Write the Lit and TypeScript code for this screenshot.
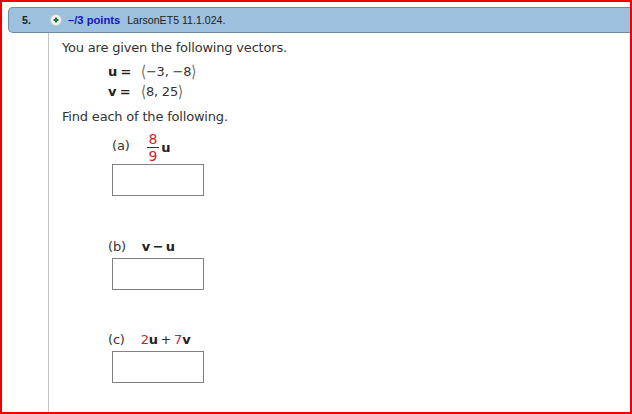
import { LitElement, html, css } from "lit";
import { customElement } from "lit/decorators.js";

@customElement("app-root")
export class AppRoot extends LitElement {
  static styles = css`
    :host {
      display: block; box-sizing: border-box; width: 632px; height: 414px;
      border: 2px solid #f00000; background: #fff; overflow: hidden;
      font-family: "DejaVu Sans", Verdana, sans-serif; font-size: 13px; color: #333;
      letter-spacing: -0.19px;
    }
    .page { display: flex; flex-direction: column; height: 100%; padding-top: 5px; box-sizing: border-box; }
    .head {
      display: flex; align-items: center; height: 26px; box-sizing: border-box; margin-left: 6px;
      background: #9dc0df; border: 1px solid #6f8ba0; border-right: none; border-radius: 5px 0 0 5px;
      font-family: "Liberation Sans", Arial, sans-serif; font-size: 10.6px; color: #222; letter-spacing: 0;
    }
    .num { width: 28px; padding-left: 13px; font-weight: bold; }
    .plus { display: block; margin-right: 5px; }
    .pts { color: #1414c8; font-weight: bold; font-size: 11.2px; margin-left: 1px; margin-right: 7px; }
    .body { flex: 1; margin-left: 46px; border-left: 1px solid #c4c4c4; padding: 7px 0 0 13px; line-height: 15px; }
    .vecs { margin: 9px 0 10px 46px; display: grid; grid-template-columns: 33px auto; justify-content: start; row-gap: 5px; }
    b { color: #222; letter-spacing: -0.6px; }
    .red { color: #d01c2c; }
    .br { display: inline-block; transform: scaleY(1.25); color: #666; }
    .part { display: flex; align-items: center; }
    .a { margin: 8px 0 0 50px; height: 30px; gap: 17px; }
    .a-label { margin-bottom: 4px; }
    .frac { display: flex; flex-direction: column; align-items: center; font-size: 14px; line-height: 14px; margin-right: 2px; }
    .frac .n { border-bottom: 1px solid #333; padding: 0 2px 1px; }
    .frac .d { padding-top: 1px; }
    .eq { display: flex; align-items: center; }
    .b { margin: 42px 0 0 46px; gap: 16px; height: 16px; }
    .c { margin: 41px 0 0 46px; gap: 16px; height: 16px; }
    .expr { word-spacing: -1px; }
    .box { width: 92px; height: 32px; box-sizing: border-box; border: 1px solid #808080; background: #fff; margin-left: 50px; }
    .a + .box { margin-top: 2px; }
    .b + .box, .c + .box { margin-top: 4px; }
  `;

  render() {
    return html`
      <div class="page">
        <div class="head">
          <span class="num">5.</span>
          <svg class="plus" width="12" height="12" viewBox="0 0 12 12">
            <circle cx="6" cy="6" r="5.5" fill="#f2f6f2" stroke="#b9c9d6" />
            <path d="M6 3.5v5M3.5 6h5" stroke="#1c7a2c" stroke-width="2" />
          </svg>
          <span class="pts">–/3 points</span>
          <span>LarsonET5 11.1.024.</span>
        </div>
        <div class="body">
          <div>You are given the following vectors.</div>
          <div class="vecs">
            <b>u =</b><span><span class="br">⟨</span>−3, −8<span class="br">⟩</span></span>
            <b>v =</b><span><span class="br">⟨</span>8, 25<span class="br">⟩</span></span>
          </div>
          <div>Find each of the following.</div>
          <div class="part a">
            <span class="a-label">(a)</span>
            <span class="eq">
              <span class="frac red"><span class="n">8</span><span class="d">9</span></span><b>u</b>
            </span>
          </div>
          <div class="box"></div>
          <div class="part b"><span>(b)</span><b class="expr">v − u</b></div>
          <div class="box"></div>
          <div class="part c">
            <span>(c)</span>
            <span class="expr"><span class="red">2</span><b>u</b> + <span class="red">7</span><b>v</b></span>
          </div>
          <div class="box"></div>
        </div>
      </div>
    `;
  }
}
